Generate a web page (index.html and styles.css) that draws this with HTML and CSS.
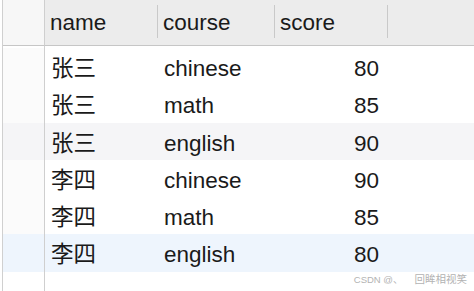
FILE: index.html
```html
<!DOCTYPE html>
<html lang="zh">
<head>
<meta charset="utf-8">
<title>table</title>
<link rel="stylesheet" href="styles.css">
</head>
<body>
<div class="table">
  <div class="row head">
    <div class="gut"></div>
    <div class="th">name</div>
    <div class="th sep">course</div>
    <div class="th sep">score</div>
    <div class="th sep"></div>
  </div>
  <div class="rows">
    <div class="row"><div class="gut"></div><div class="td c1">张三</div><div class="td c2">chinese</div><div class="td c3">80</div><div class="td"></div></div>
    <div class="row"><div class="gut"></div><div class="td c1">张三</div><div class="td c2">math</div><div class="td c3">85</div><div class="td"></div></div>
    <div class="row alt"><div class="gut"></div><div class="td c1">张三</div><div class="td c2">english</div><div class="td c3">90</div><div class="td"></div></div>
    <div class="row"><div class="gut"></div><div class="td c1">李四</div><div class="td c2">chinese</div><div class="td c3">90</div><div class="td"></div></div>
    <div class="row"><div class="gut"></div><div class="td c1">李四</div><div class="td c2">math</div><div class="td c3">85</div><div class="td"></div></div>
    <div class="row sel"><div class="gut"></div><div class="td c1">李四</div><div class="td c2">english</div><div class="td c3">80</div><div class="td"></div></div>
  </div>
  <div class="mark"><span class="src">CSDN @、</span><span>回眸相视笑</span></div>
</div>
</body>
</html>
```

FILE: styles.css
```css
html, body {
  margin: 0;
  padding: 0;
  background: #ffffff;
}
body {
  width: 474px;
  height: 291px;
  overflow: hidden;
  font-family: "Liberation Sans", "Noto Sans CJK SC", sans-serif;
  color: #1a1a1a;
}
.table {
  position: relative;
  margin-left: 2px;
  height: 291px;
  border-left: 1px solid #d0d0d0;
  background: linear-gradient(#cfcfcf, #cfcfcf) 41px 0 / 1px 100% no-repeat, #ffffff;
}
.row {
  display: grid;
  grid-template-columns: 42px 112px 117px 113px 1fr;
}
.gut {
  box-sizing: border-box;
  border-right: 1px solid #cfcfcf;
  background: #fbfbfb;
}
.head .gut {
  background: #f7f7f7;
  border-bottom: 1px solid #c6c6c6;
}
.th {
  height: 45px;
  line-height: 45px;
  font-size: 22.5px;
  padding-left: 5px;
  background: #ececec;
  border-bottom: 1px solid #c6c6c6;
  white-space: nowrap;
}
.th.sep {
  padding-left: 6px;
  background: linear-gradient(#c9c9c9, #c9c9c9) 0 5px / 1px 33px no-repeat, #ececec;
}
.rows {
  padding-top: 2px;
}
.rows .row {
  height: 37.3px;
}
.td {
  font-size: 22.5px;
  padding-top: 5px;
  line-height: 32.3px;
  white-space: nowrap;
}
.c1 { padding-left: 6px; }
.c2 { padding-left: 7px; }
.c3 { text-align: right; padding-right: 8px; }
.alt { background: #f5f5f7; }
.alt .gut { background: #f5f5f7; }
.sel { background: #eef5fd; }
.sel .gut { background: #eef5fd; }
.mark {
  position: absolute;
  right: 7px;
  bottom: 5px;
  font-size: 10.5px;
  color: #b3b3b3;
  display: flex;
  align-items: baseline;
  gap: 12px;
}
.mark .src {
  font-size: 9.5px;
}
```
